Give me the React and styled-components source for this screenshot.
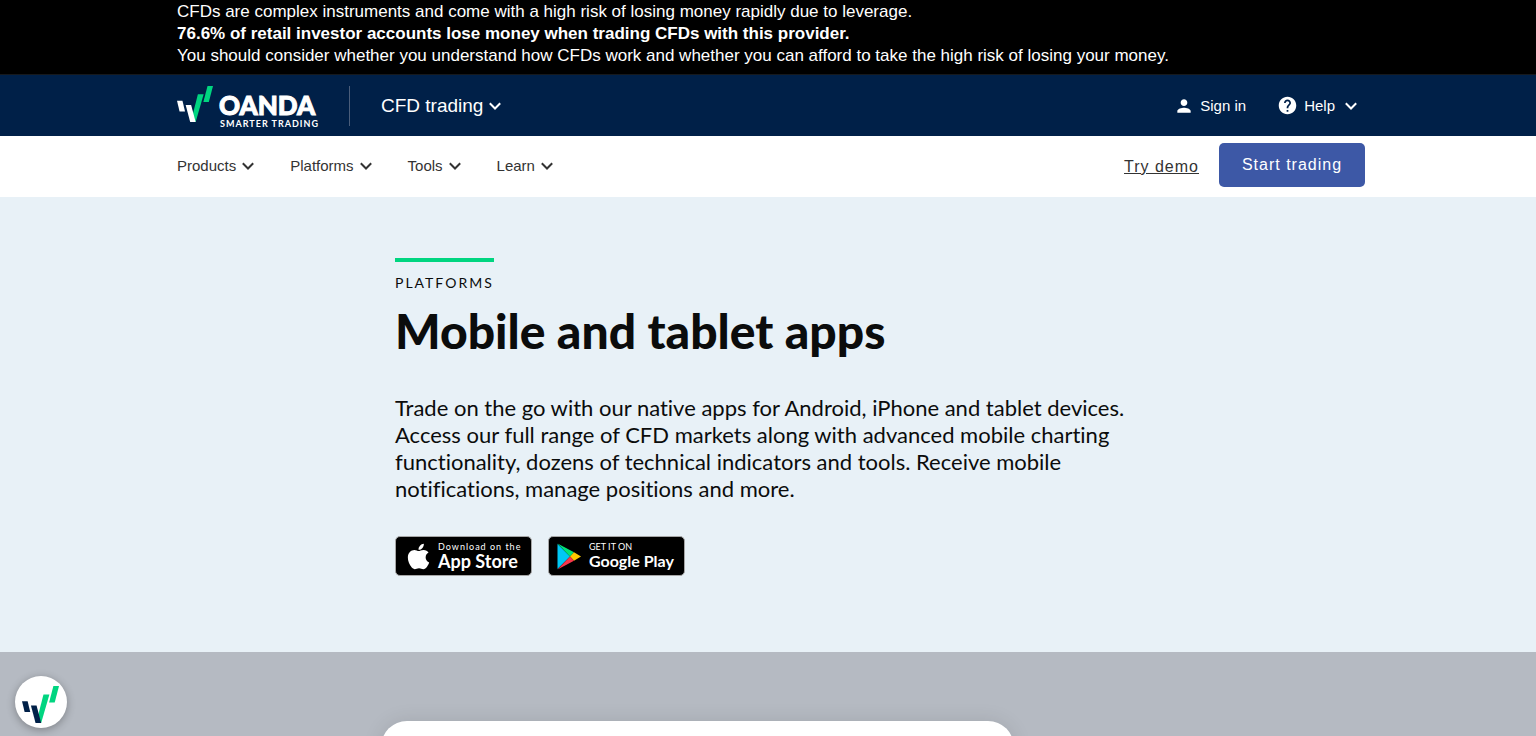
import React from 'react';
import styled, {createGlobalStyle} from 'styled-components'
import {FaApple} from 'react-icons/fa'
import {MdPerson, MdHelp} from 'react-icons/md'

const GlobalStyle = createGlobalStyle`
  * {
    box-sizing: border-box;
  }

  body {
    margin: 0;
    font-family: "Liberation Sans", Arial, sans-serif;
    font-variant-ligatures: none;
    color: #0b0c0c;
  }

  a {
    color: inherit;
    text-decoration: none;
  }
`

const Page = styled.div`
  display: flex;
  flex-direction: column;
  min-height: 100vh;
`

const Container = styled.div`
  width: 100%;
  max-width: 1200px;
  margin: 0 auto;
  padding: 0 9px;
`

const RiskBar = styled.div`
  padding: 1px 0 7px;
  border-bottom: 1px solid #16191d;
  background: #000;
  color: #fff;
  font-size: 17px;
  line-height: 22px;
`

const RiskText = styled.p`
  margin: 0;
`

const Header = styled.header`
  background: #002048;
  color: #fff;
`

const HeaderRow = styled(Container)`
  display: flex;
  align-items: center;
  height: 61px;
`

const Logo = styled.a`
  display: flex;
  gap: 6px;
  padding-top: 3px;
  padding-right: 29px;
`

const LogoText = styled.span`
  display: flex;
  flex-direction: column;
  width: 101px;
  padding-top: 6px;
  font-family: Lato, sans-serif;
`

const LogoName = styled.span`
  font-size: 26px;
  font-weight: 900;
  line-height: 26px;
  -webkit-text-stroke: 1px currentColor;
`

const LogoTagline = styled.span`
  padding-left: 1px;
  font-size: 9px;
  font-weight: 700;
  line-height: 11px;
  letter-spacing: 1px;
  white-space: nowrap;
`

const Divider = styled.span`
  width: 1px;
  height: 40px;
  margin-right: 31px;
  background: #4a5d7a;
`

const MenuButton = styled.button`
  display: flex;
  align-items: center;
  gap: 6px;
  padding: 0;
  border: 0;
  background: none;
  color: inherit;
  font-family: inherit;
  font-size: ${({$size}) => $size || 15}px;
  line-height: 22px;
  cursor: pointer;
`

const AccountLinks = styled.div`
  display: flex;
  align-items: center;
  gap: 31px;
  margin-left: auto;
  padding-right: 2px;
`

const SignIn = styled.a`
  display: flex;
  align-items: center;
  gap: 6px;
  font-size: 15px;
`

const HelpLabel = styled.span`
  margin-right: 4px;
`

const Nav = styled.nav`
  background: #fff;
  color: #333;
`

const NavRow = styled(Container)`
  display: flex;
  align-items: center;
  height: 61px;
  padding-right: 3px;
  padding-bottom: 2px;
`

const NavMenu = styled.div`
  display: flex;
  gap: 36px;
`

const NavActions = styled.div`
  display: flex;
  align-items: center;
  gap: 20px;
  margin-left: auto;
  padding-bottom: 1px;
  font-size: 16px;
  letter-spacing: 1px;
`

const DemoLink = styled.a`
  padding-top: 3px;
  text-decoration: underline;
`

const StartButton = styled.button`
  width: 146px;
  height: 44px;
  padding: 0;
  border: 0;
  border-radius: 5px;
  background: #3d58a6;
  color: #fff;
  font: inherit;
  letter-spacing: inherit;
  cursor: pointer;
`

const Hero = styled.section`
  padding: 61px 20px 76px;
  background: #e8f1f7;
  font-family: Lato, sans-serif;
`

const HeroContent = styled.div`
  max-width: 746px;
  margin: 0 auto;
`

const Eyebrow = styled.span`
  display: inline-block;
  padding-top: 10px;
  border-top: 4px solid #00d580;
  font-size: 14px;
  line-height: 22px;
  letter-spacing: 2px;
  text-transform: uppercase;
`

const Title = styled.h1`
  margin: 7px 0 0;
  font-size: 48px;
  font-weight: 900;
  line-height: 60px;
`

const Lead = styled.p`
  margin: 33px 0 0;
  font-size: 22px;
  line-height: 27px;
`

const Badges = styled.div`
  display: flex;
  gap: 16px;
  margin-top: 34px;
`

const Badge = styled.a`
  display: flex;
  align-items: center;
  gap: ${({$gap}) => $gap}px;
  width: 137px;
  height: 40px;
  padding-left: 8px;
  border: 1px solid #a6a6a6;
  border-radius: 5px;
  background: #000;
  color: #fff;
  white-space: nowrap;
`

const BadgeText = styled.span`
  display: flex;
  flex-direction: column;
  padding-bottom: 2px;
`

const BadgeSmall = styled.span`
  font-size: 9px;
  line-height: 11px;
  letter-spacing: ${({$wide}) => $wide ? 1 : 0}px;
`

const BadgeName = styled.span`
  font-size: ${({$size}) => $size}px;
  font-weight: 700;
  line-height: 18px;
`

const Details = styled.section`
  flex: 1;
  padding: 69px 20px;
  background: #b5bac2;
`

const DetailsRow = styled.div`
  max-width: 774px;
  margin: 0 auto;
`

const Card = styled.div`
  max-width: 633px;
  min-height: 400px;
  border-radius: 26px;
  background: #fff;
  box-shadow: 0 0 20px rgba(0, 0, 0, 0.1);
`

const ChatButton = styled.button`
  position: fixed;
  left: 15px;
  bottom: 8px;
  display: flex;
  align-items: center;
  justify-content: center;
  width: 52px;
  height: 52px;
  padding: 5px 1px 0 0;
  border: 0;
  border-radius: 50%;
  background: #fff;
  box-shadow: 0 2px 8px rgba(0, 0, 0, 0.3);
  cursor: pointer;
`

const Mark = ({size, color}) => (
    <svg width={size} height={size} viewBox="0 0 112 112" aria-hidden="true">
        <path fill={color} d="M0 46H17L25 79H8Z"/>
        <path fill="#00d580" d="M65 26H83L58 112H51L46 100Z"/>
        <path fill={color} d="M27 59H44L58 112H41Z"/>
        <path fill="#00d580" d="M95 0H112L99 50H82Z"/>
    </svg>
)

const Chevron = () => (
    <svg width="12" height="8" viewBox="0 0 12 8" fill="none" stroke="currentColor" strokeWidth="2" aria-hidden="true">
        <path d="M0.8 1.3L6 6.5L11.2 1.3"/>
    </svg>
)

const PlayIcon = () => (
    <svg width="24" height="27" viewBox="0 0 24 27" aria-hidden="true">
        <path fill="#00c8f5" d="M0.5 1L13 13.5L0.5 26Z"/>
        <path fill="#00e277" d="M0.5 0.5L17 9.3L13 13.5Z"/>
        <path fill="#ffc900" d="M17 9.3L24 13.5L17 17.7L13 13.5Z"/>
        <path fill="#f7374b" d="M13 13.5L17 17.7L0.5 26.5Z"/>
    </svg>
)

const menu = ['Products', 'Platforms', 'Tools', 'Learn']

const App = () => {
    return (
        <Page>
            <GlobalStyle/>
            <RiskBar>
                <Container>
                    <RiskText>CFDs are complex instruments and come with a high risk of losing money rapidly due to leverage.</RiskText>
                    <RiskText><strong>76.6% of retail investor accounts lose money when trading CFDs with this provider.</strong></RiskText>
                    <RiskText>You should consider whether you understand how CFDs work and whether you can afford to take the high risk of losing your money.</RiskText>
                </Container>
            </RiskBar>
            <Header>
                <HeaderRow>
                    <Logo href="#">
                        <Mark size={36} color="#fff"/>
                        <LogoText>
                            <LogoName>OANDA</LogoName>
                            <LogoTagline>SMARTER TRADING</LogoTagline>
                        </LogoText>
                    </Logo>
                    <Divider/>
                    <MenuButton $size={19}>CFD trading<Chevron/></MenuButton>
                    <AccountLinks>
                        <SignIn href="#"><MdPerson size={20}/>Sign in</SignIn>
                        <MenuButton><MdHelp size={21}/><HelpLabel>Help</HelpLabel><Chevron/></MenuButton>
                    </AccountLinks>
                </HeaderRow>
            </Header>
            <Nav>
                <NavRow>
                    <NavMenu>
                        {menu.map(item => <MenuButton key={item}>{item}<Chevron/></MenuButton>)}
                    </NavMenu>
                    <NavActions>
                        <DemoLink href="#">Try demo</DemoLink>
                        <StartButton>Start trading</StartButton>
                    </NavActions>
                </NavRow>
            </Nav>
            <Hero>
                <HeroContent>
                    <Eyebrow>Platforms</Eyebrow>
                    <Title>Mobile and tablet apps</Title>
                    <Lead>
                        Trade on the go with our native apps for Android, iPhone and tablet devices. Access our full
                        range of CFD markets along with advanced mobile charting functionality, dozens of technical
                        indicators and tools. Receive mobile notifications, manage positions and more.
                    </Lead>
                    <Badges>
                        <Badge href="#" $gap={5}>
                            <FaApple size={29}/>
                            <BadgeText>
                                <BadgeSmall $wide>Download on the</BadgeSmall>
                                <BadgeName $size={18}>App Store</BadgeName>
                            </BadgeText>
                        </Badge>
                        <Badge href="#" $gap={8}>
                            <PlayIcon/>
                            <BadgeText>
                                <BadgeSmall>GET IT ON</BadgeSmall>
                                <BadgeName $size={16}>Google Play</BadgeName>
                            </BadgeText>
                        </Badge>
                    </Badges>
                </HeroContent>
            </Hero>
            <Details>
                <DetailsRow>
                    <Card/>
                </DetailsRow>
            </Details>
            <ChatButton aria-label="Chat">
                <Mark size={37} color="#002048"/>
            </ChatButton>
        </Page>
    )
}

export default App
